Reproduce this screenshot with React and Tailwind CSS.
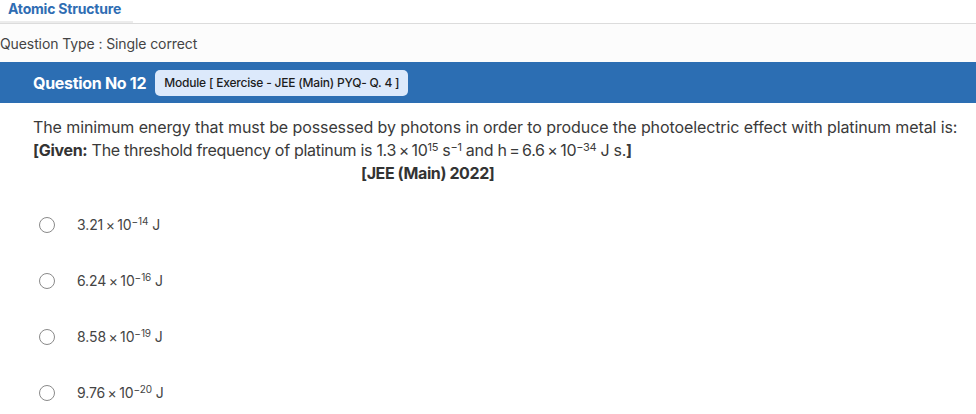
import React from "react";

const options = [
  { base: "3.21", exp: "−14" },
  { base: "6.24", exp: "−16" },
  { base: "8.58", exp: "−19" },
  { base: "9.76", exp: "−20" },
];

const Sci = ({ base, exp }) => (
  <span>
    {base}{"\u2009×\u2009"}10<sup className="text-[10px]">{exp}</sup> J
  </span>
);

const App = () => {
  return (
    <div
      className="w-[976px] h-[414px] bg-white overflow-hidden text-[#333]"
      style={{ fontFamily: "Inter, 'Open Sans', sans-serif" }}
    >
      {/* tab */}
      <div className="h-[24px] border-b border-[#dcdcdc] flex">
        <div className="w-[133px] border-b-2 border-[#ececec] px-[8px] leading-[16px]">
          <span className="text-[14px] font-bold text-[#2f6db3] tracking-[-0.2px]">
            Atomic Structure
          </span>
        </div>
      </div>

      {/* question type */}
      <div className="h-[38px] bg-[#fcfcfc] flex items-center text-[14px] text-[#444] tracking-[-0.1px]">
        Question Type : Single correct
      </div>

      {/* header bar */}
      <div className="h-[41px] bg-[#2c6eb3] flex items-center pl-[33px] gap-[9px]">
        <span className="text-white font-bold text-[16px] tracking-[-0.3px]">
          Question No 12
        </span>
        <span className="bg-[#dce9fb] rounded-[5px] px-[9px] h-[26px] flex items-center text-[12px] font-medium text-[#1c1c1c] tracking-[-0.2px]">
          Module [ Exercise - JEE (Main) PYQ- Q. 4 ]
        </span>
      </div>

      {/* question */}
      <div className="pl-[33px] pt-[13px] text-[16px] leading-[23px] text-[#3a3a3a] tracking-[-0.1px]">
        <p>
          The minimum energy that must be possessed by photons in order to produce the photoelectric effect with platinum metal is:
        </p>
        <p className="tracking-[-0.3px]">
          <b className="text-[#333]">[Given:</b> The threshold frequency of platinum is 1.3{"\u2009×\u2009"}10
          <sup className="text-[11px]">15</sup> s<sup className="text-[11px]">−1</sup> and h{"\u2009=\u2009"}6.6{"\u2009×\u2009"}10
          <sup className="text-[11px]">−34</sup> J s.<b>]</b>
        </p>
        <p className="pl-[328px] font-bold text-[#333] tracking-[-0.4px]">[JEE (Main) 2022]</p>
      </div>

      {/* options */}
      <div className="mt-[29px] pl-[39px] flex flex-col gap-[35px]">
        {options.map((o) => (
          <div key={o.base} className="flex items-center h-[21px] text-[14px] text-[#444] tracking-[-0.1px]">
            <span className="w-[16px] h-[16px] rounded-full border-[1.5px] border-[#8a8a8a] bg-white" />
            <span className="ml-[22px]">
              <Sci base={o.base} exp={o.exp} />
            </span>
          </div>
        ))}
      </div>
    </div>
  );
};

export default App;
